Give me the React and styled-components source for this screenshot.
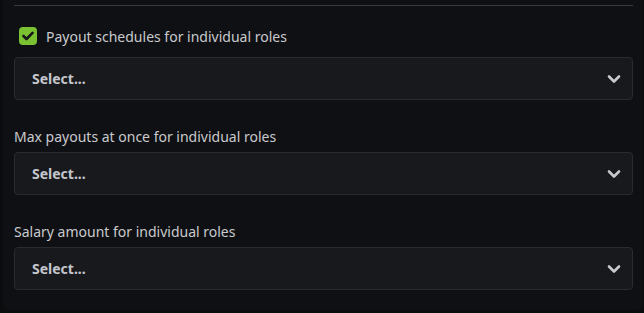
import styled, { createGlobalStyle } from "styled-components"

const Global = createGlobalStyle`
  html, body {
    margin: 0;
    padding: 0;
    background: #0b0c0e;
    font-family: "Noto Sans", "Open Sans", sans-serif;
  }
`

const Panel = styled.div`
  margin-left: 3px;
  width: 640px;
  height: 310px;
  box-sizing: border-box;
  background: #0f1013;
  border-radius: 0 0 6px 6px;
  padding: 5px 10px 0 11px;
  display: flex;
  flex-direction: column;
`

const Divider = styled.div`
  height: 1px;
  background: #3a3b3f;
`

const CheckRow = styled.label`
  display: flex;
  align-items: center;
  gap: 9px;
  margin-top: 21px;
  margin-left: 5px;
  height: 18px;
  color: #c9cace;
  font-size: 14px;
`

const Box = styled.span`
  width: 18px;
  height: 18px;
  border-radius: 4px;
  background: #7bc232;
  display: flex;
  align-items: center;
  justify-content: center;
`

const Label = styled.div`
  color: #c9cace;
  font-size: 14px;
  line-height: 20px;
  margin-top: ${(props) => props.top || "27px"};
  margin-bottom: 5px;
`

const SelectBox = styled.div`
  height: 43px;
  box-sizing: border-box;
  margin-top: ${(props) => props.top || "0px"};
  background: #18191c;
  border: 1px solid #2a2b2f;
  border-radius: 4px;
  display: flex;
  align-items: center;
  justify-content: space-between;
  padding: 0 11px 0 17px;
  color: #c3c6cc;
  font-size: 14px;
  font-weight: 700;
`

function Chevron() {
  return (
    <svg width="14" height="10" viewBox="0 0 14 10">
      <path d="M2 2.5 L7 7.5 L12 2.5" fill="none" stroke="#c8c9cd" strokeWidth="2.6" strokeLinecap="round" strokeLinejoin="round" />
    </svg>
  )
}

function Select({ top }) {
  return (
    <SelectBox top={top}>
      <span>Select...</span>
      <Chevron />
    </SelectBox>
  )
}

function App() {
  return (
    <>
      <Global />
      <Panel>
        <Divider />
        <CheckRow>
          <Box>
            <svg width="12" height="10" viewBox="0 0 12 10">
              <path d="M1.5 5 L4.5 8 L10.5 1.8" fill="none" stroke="#16171a" strokeWidth="2.6" strokeLinecap="round" strokeLinejoin="round" />
            </svg>
          </Box>
          Payout schedules for individual roles
        </CheckRow>
        <Select top="12px" />
        <Label>Max payouts at once for individual roles</Label>
        <Select />
        <Label>Salary amount for individual roles</Label>
        <Select />
      </Panel>
    </>
  )
}

export default App
